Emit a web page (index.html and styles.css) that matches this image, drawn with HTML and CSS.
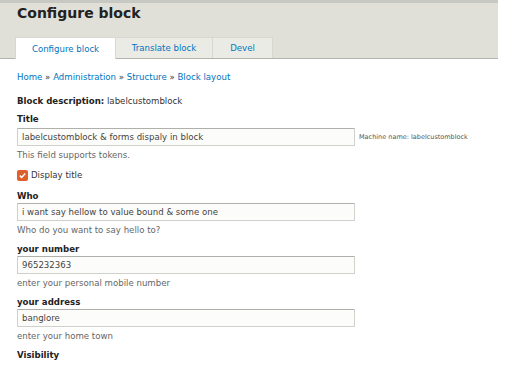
FILE: index.html
```html
<!DOCTYPE html>
<html lang="en">
<head>
    <meta charset="UTF-8">
    <title>Configure block</title>
    <link rel="stylesheet" href="styles.css">
</head>
<body>
    <div class="header">
        <h1>Configure block</h1>
        <ul class="tabs">
            <li class="active"><a href="#">Configure block</a></li>
            <li><a href="#">Translate block</a></li>
            <li><a href="#">Devel</a></li>
        </ul>
    </div>
    <div class="content">
        <div class="breadcrumb">
            <a href="#">Home</a> » <a href="#">Administration</a> » <a href="#">Structure</a> » <a href="#">Block layout</a>
        </div>
        <div class="item"><b>Block description:</b> labelcustomblock</div>
        <div class="form-item title-item">
            <label>Title</label>
            <div class="row">
                <input type="text" value="labelcustomblock &amp; forms dispaly in block">
                <span class="machine">Machine name: labelcustomblock</span>
            </div>
            <div class="desc">This field supports tokens.</div>
        </div>
        <div class="check">
            <span class="box"><svg width="9" height="9" viewBox="0 0 9 9"><path d="M1.8 4.6 L3.7 6.4 L7.2 2.6" fill="none" stroke="#fff" stroke-width="1.5"/></svg></span>
            Display title
        </div>
        <div class="form-item">
            <label>Who</label>
            <input type="text" value="i want say hellow to value bound &amp; some one">
            <div class="desc">Who do you want to say hello to?</div>
        </div>
        <div class="form-item">
            <label>your number</label>
            <input type="text" value="965232363">
            <div class="desc">enter your personal mobile number</div>
        </div>
        <div class="form-item">
            <label>your address</label>
            <input type="text" value="banglore">
            <div class="desc">enter your home town</div>
        </div>
        <div class="form-item">
            <label>Visibility</label>
        </div>
    </div>
</body>
</html>
```

FILE: styles.css
```css
body {
    margin: 0;
    font-family: "DejaVu Sans", sans-serif;
    font-size: 8.6px;
    color: #333;
    background: #fff;
}
a {
    color: #0074bd;
    text-decoration: none;
}
.header {
    width: 498px;
    height: 55px;
    background: #e0e0d8;
    border-top: 3px solid #c8c8c2;
    border-bottom: 1px solid #b4b4ae;
    display: flex;
    flex-direction: column;
    justify-content: space-between;
}
.header h1 {
    margin: 0;
    padding: 2px 0 0 17px;
    font-size: 14px;
    font-weight: bold;
    color: #222;
}
.tabs {
    list-style: none;
    margin: 0;
    padding: 0 0 0 15px;
    display: flex;
}
.tabs li {
    height: 21px;
    background: #ebebe5;
    border: 1px solid #d8d8d0;
    border-bottom: none;
    border-left: none;
    box-sizing: border-box;
    display: flex;
    align-items: center;
    justify-content: center;
}
.tabs li:first-child {
    border-left: 1px solid #d8d8d0;
}
.tabs li.active {
    background: #fff;
    margin-bottom: -1px;
    height: 22px;
}
.tabs li:nth-child(1) { width: 101px; }
.tabs li:nth-child(2) { width: 97px; }
.tabs li:nth-child(3) { width: 60px; }
.content {
    padding: 12px 17px 0;
}
.breadcrumb {
    line-height: 12px;
    margin-bottom: 12px;
}
.item {
    line-height: 12px;
    margin-bottom: 6px;
}
.item b, label {
    font-weight: bold;
    color: #222;
}
.form-item {
    margin-bottom: 7px;
}
label {
    display: block;
    line-height: 12px;
    margin-bottom: 1px;
}
.title-item label {
    margin-bottom: 3px;
}
.row {
    display: flex;
    align-items: center;
}
input[type="text"] {
    display: block;
    width: 338px;
    height: 18px;
    box-sizing: border-box;
    margin: 0;
    padding: 0 4px;
    font-family: "DejaVu Sans", sans-serif;
    font-size: 8.6px;
    color: #444;
    background: #fcfcfa;
    border: 1px solid #d0d0cc;
    border-top-color: #b0b0aa;
    border-radius: 1px;
}
.machine {
    margin-left: 4px;
    font-size: 6.5px;
    color: #555;
}
.desc {
    color: #666;
    line-height: 12px;
    margin-top: 3px;
}
.check {
    display: flex;
    align-items: center;
    line-height: 12px;
    margin: 8px 0 9px;
}
.box {
    width: 11px;
    height: 11px;
    background: #e0602c;
    border-radius: 2px;
    margin-right: 3px;
    display: flex;
    align-items: center;
    justify-content: center;
}
```
